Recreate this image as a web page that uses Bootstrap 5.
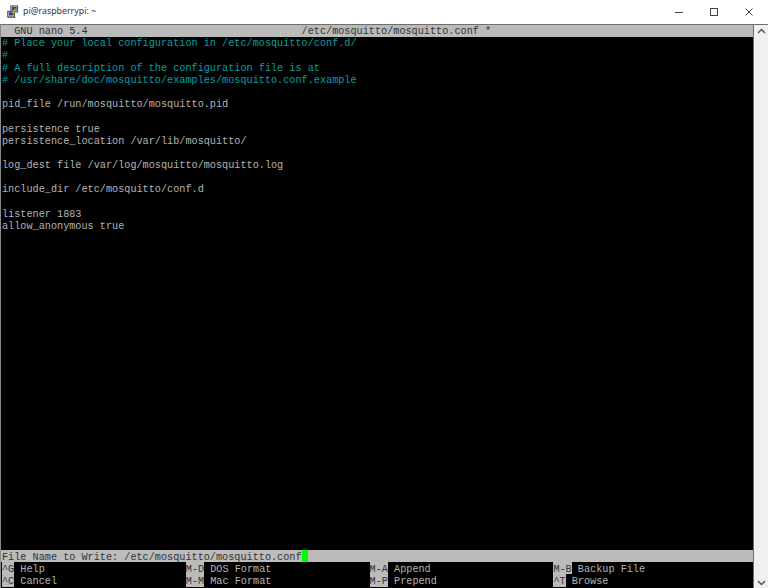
<!DOCTYPE html>
<html lang="en">
<head>
<meta charset="utf-8">
<title>pi@raspberrypi: ~</title>
<link href="https://cdn.jsdelivr.net/npm/bootstrap@5.3.0/dist/css/bootstrap.min.css" rel="stylesheet">
<style>
html, body { height: 100%; margin: 0; background: #fff; overflow: hidden; }
.win { height: 588px; width: 768px; }
.tbar { height: 24px; padding-left: 7px; padding-right: 2px; background: #fff; }
.tbar-title { font-family: "Noto Sans", "Liberation Sans", sans-serif; font-size: 8.8px; color: #333; margin-left: 3px; }
.wctl { width: 35px; height: 24px; }
.tbody { min-height: 0; border-top: 1px solid #6e6e6e; border-left: 1px solid #8a8a8a; }
.term { width: 753px; background: #000; font-family: "Liberation Mono", monospace; font-size: 10.2px; color: #b4b4b4; border-right: 1px solid #6e6e6e; }
.ln { height: 12.2px; line-height: 12.2px; white-space: pre; padding-left: 1px; padding-top: 1px; }
.ln-gap { height: 13.2px; }
.ln-low { padding-top: 2px; }
.rev { background: #bbb; color: #333; }
.cmt { color: #00a0a0; }
.cur { display: inline-block; width: 6px; height: 12.2px; background: #0f0; vertical-align: top; margin-top: -2px; }
.shk { display: inline-block; background: #bbb; color: #333; height: 12.2px; margin-top: -2px; padding-top: 2px; vertical-align: top; }
.cell { display: inline-block; width: 183.8px; }
.sbar { width: 14px; background: #f0f0f0; }
.sarrow { height: 17px; }
.grow { flex: 1 1 auto; min-height: 0; }
</style>
</head>
<body>
<div class="win d-flex flex-column">
  <div class="tbar d-flex align-items-center flex-shrink-0">
    <svg width="13" height="14" viewBox="0 0 17 17" aria-hidden="true">
      <rect x="5" y="0.5" width="9" height="8" fill="#c9c9d6" stroke="#222"/>
      <rect x="6.5" y="2" width="6" height="4.5" fill="#2a3f8f"/>
      <rect x="1" y="7.5" width="9" height="7.5" fill="#c9c9d6" stroke="#222"/>
      <rect x="2.5" y="9" width="6" height="4" fill="#2a3f8f"/>
      <rect x="1" y="15" width="10" height="1.5" fill="#777"/>
      <path d="M10 4 L7 9 L9.5 9 L5.5 14 L11.5 8 L9 8 L12 4 Z" fill="#f2d21b" stroke="#8a7400" stroke-width=".4"/>
    </svg>
    <span class="tbar-title flex-grow-1">pi@raspberrypi: ~</span>
    <div class="wctl d-flex align-items-center justify-content-center">
      <svg width="8" height="8" viewBox="0 0 8 8"><path d="M0 4.5H8" stroke="#444"/></svg>
    </div>
    <div class="wctl d-flex align-items-center justify-content-center">
      <svg width="8" height="8" viewBox="0 0 8 8"><rect x=".5" y=".5" width="7" height="7" fill="none" stroke="#444"/></svg>
    </div>
    <div class="wctl d-flex align-items-center justify-content-center">
      <svg width="8" height="8" viewBox="0 0 8 8"><path d="M.5 .5L7.5 7.5M7.5 .5L.5 7.5" stroke="#444"/></svg>
    </div>
  </div>
  <div class="tbody grow d-flex">
    <div class="term flex-shrink-0">
      <div class="ln rev">  GNU nano 5.4                                   /etc/mosquitto/mosquitto.conf *</div>
      <div class="ln cmt"># Place your local configuration in /etc/mosquitto/conf.d/</div>
      <div class="ln cmt">#</div>
      <div class="ln cmt"># A full description of the configuration file is at</div>
      <div class="ln cmt"># /usr/share/doc/mosquitto/examples/mosquitto.conf.example</div>
      <div class="ln"> </div>
      <div class="ln">pid_file /run/mosquitto/mosquitto.pid</div>
      <div class="ln"> </div>
      <div class="ln">persistence true</div>
      <div class="ln">persistence_location /var/lib/mosquitto/</div>
      <div class="ln"> </div>
      <div class="ln">log_dest file /var/log/mosquitto/mosquitto.log</div>
      <div class="ln"> </div>
      <div class="ln">include_dir /etc/mosquitto/conf.d</div>
      <div class="ln"> </div>
      <div class="ln">listener 1883</div>
      <div class="ln">allow_anonymous true</div>
      <div class="ln"> </div><div class="ln"> </div><div class="ln"> </div><div class="ln"> </div><div class="ln"> </div>
      <div class="ln"> </div><div class="ln"> </div><div class="ln"> </div><div class="ln"> </div><div class="ln"> </div>
      <div class="ln"> </div><div class="ln"> </div><div class="ln"> </div><div class="ln"> </div><div class="ln"> </div>
      <div class="ln"> </div><div class="ln"> </div><div class="ln"> </div><div class="ln"> </div><div class="ln"> </div>
      <div class="ln"> </div><div class="ln"> </div><div class="ln"> </div><div class="ln"> </div><div class="ln"> </div>
      <div class="ln ln-gap"> </div>
      <div class="ln ln-low rev">File Name to Write: /etc/mosquitto/mosquitto.conf<span class="cur"></span></div>
      <div class="ln ln-low"><span class="cell"><span class="shk">^G</span> Help</span><span class="cell"><span class="shk">M-D</span> DOS Format</span><span class="cell"><span class="shk">M-A</span> Append</span><span class="cell"><span class="shk">M-B</span> Backup File</span></div>
      <div class="ln ln-low"><span class="cell"><span class="shk">^C</span> Cancel</span><span class="cell"><span class="shk">M-M</span> Mac Format</span><span class="cell"><span class="shk">M-P</span> Prepend</span><span class="cell"><span class="shk">^T</span> Browse</span></div>
    </div>
    <div class="sbar flex-grow-1 d-flex flex-column justify-content-between align-items-center">
      <svg class="sarrow" width="9" height="17" viewBox="0 0 9 17"><path d="M1 8L4.5 4.5L8 8" fill="none" stroke="#555" stroke-width="1.5"/></svg>
      <svg class="sarrow" width="9" height="17" viewBox="0 0 9 17"><path d="M1 10L4.5 13.5L8 10" fill="none" stroke="#555" stroke-width="1.5"/></svg>
    </div>
  </div>
</div>
<script src="https://cdn.jsdelivr.net/npm/bootstrap@5.3.0/dist/js/bootstrap.bundle.min.js"></script>
</body>
</html>
